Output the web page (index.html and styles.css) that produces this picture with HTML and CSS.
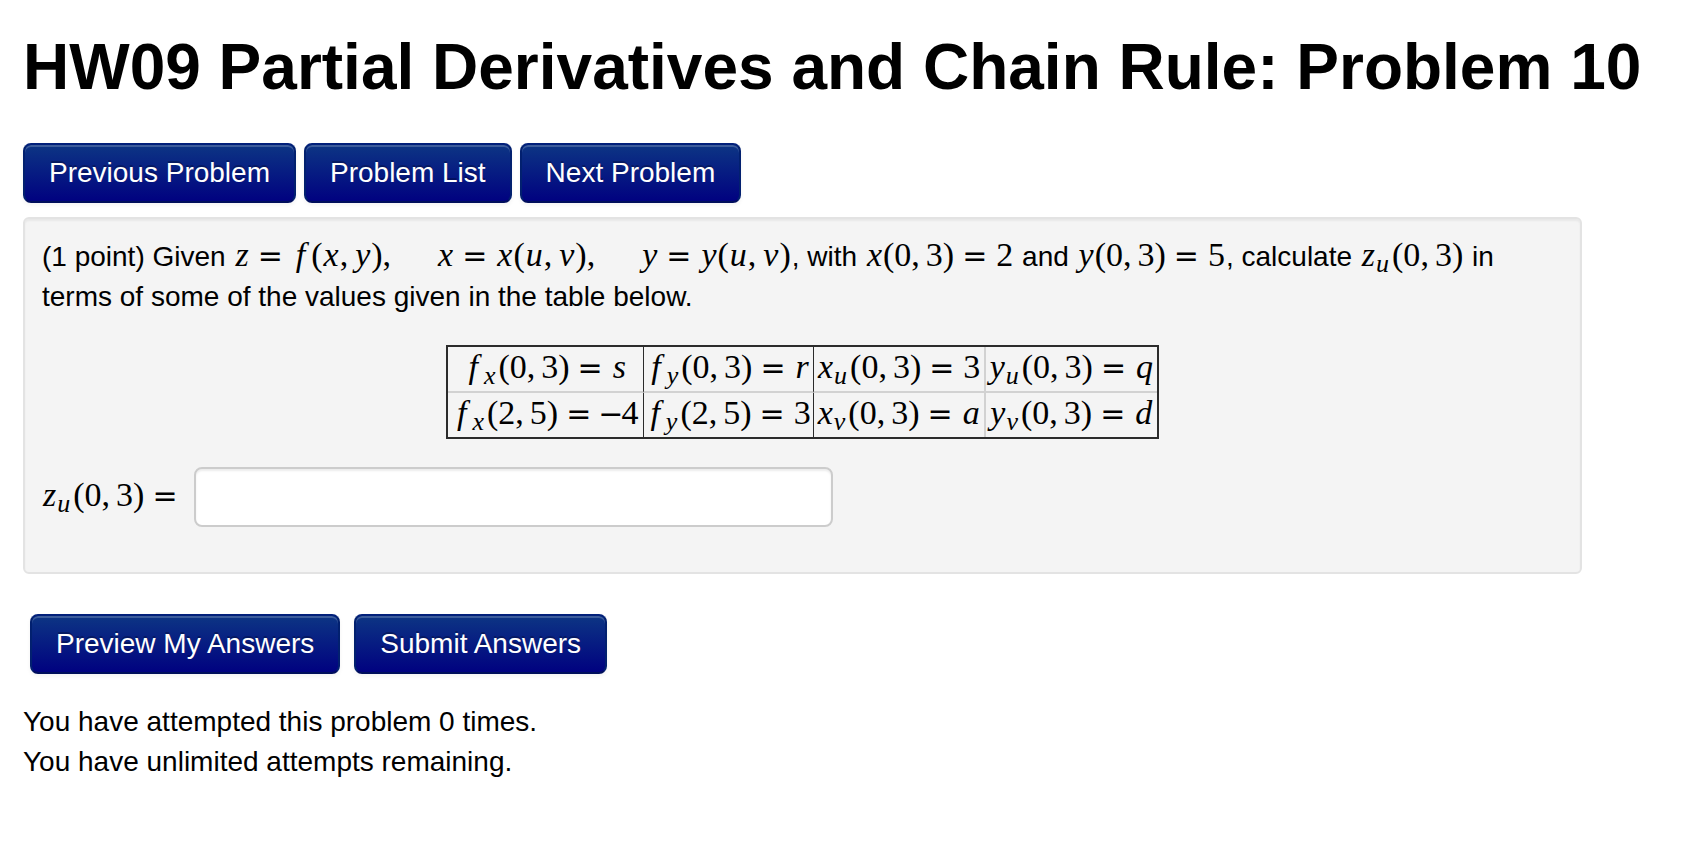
FILE: index.html
```html
<!DOCTYPE html>
<html lang="en">
<head>
<meta charset="utf-8">
<meta name="viewport" content="width=device-width, initial-scale=1">
<title>HW09 Partial Derivatives and Chain Rule: Problem 10</title>
<link rel="stylesheet" href="styles.css">
</head>
<body>
<main class="page">
  <h1 class="title">HW09 Partial Derivatives and Chain Rule: Problem 10</h1>

  <nav class="nav">
    <a class="btn" href="#previous">Previous Problem</a>
    <a class="btn" href="#list">Problem List</a>
    <a class="btn" href="#next">Next Problem</a>
  </nav>

  <form class="form">
    <section class="well">
      <p class="statement">(1 point) Given
        <span class="math"><var>z</var><span class="rel">=</span><var class="f">f</var>(<var>x</var><span class="sep">,</span><var>y</var>),</span><span class="quad"></span><span class="math"><var>x</var><span class="rel">=</span><var>x</var>(<var>u</var><span class="sep">,</span><var>v</var>),</span><span class="quad"></span><span class="math"><var>y</var><span class="rel">=</span><var>y</var>(<var>u</var><span class="sep">,</span><var>v</var>)</span>, with
        <span class="math"><var>x</var>(0<span class="sep">,</span>3)<span class="rel">=</span>2</span> and
        <span class="math"><var>y</var>(0<span class="sep">,</span>3)<span class="rel">=</span>5</span>, calculate
        <span class="math"><var>z</var><sub>u</sub>(0<span class="sep">,</span>3)</span> in terms of some of the values given in the table below.</p>

      <table class="values">
        <tbody>
          <tr>
            <td><span class="math"><var class="f">f</var><sub>x</sub>(0<span class="sep">,</span>3)<span class="rel">=</span><var>s</var></span></td>
            <td><span class="math"><var class="f">f</var><sub>y</sub>(0<span class="sep">,</span>3)<span class="rel">=</span><var>r</var></span></td>
            <td><span class="math"><var>x</var><sub>u</sub>(0<span class="sep">,</span>3)<span class="rel">=</span>3</span></td>
            <td><span class="math"><var>y</var><sub>u</sub>(0<span class="sep">,</span>3)<span class="rel">=</span><var>q</var></span></td>
          </tr>
          <tr>
            <td><span class="math"><var class="f">f</var><sub>x</sub>(2<span class="sep">,</span>5)<span class="rel">=</span><span class="minus">−</span>4</span></td>
            <td><span class="math"><var class="f">f</var><sub>y</sub>(2<span class="sep">,</span>5)<span class="rel">=</span>3</span></td>
            <td><span class="math"><var>x</var><sub>v</sub>(0<span class="sep">,</span>3)<span class="rel">=</span><var>a</var></span></td>
            <td><span class="math"><var>y</var><sub>v</sub>(0<span class="sep">,</span>3)<span class="rel">=</span><var>d</var></span></td>
          </tr>
        </tbody>
      </table>

      <div class="answer">
        <label class="math" for="answer"><var>z</var><sub>u</sub>(0<span class="sep">,</span>3)<span class="rel">=</span></label>
        <input class="field" id="answer" type="text" autocomplete="off">
      </div>
    </section>

    <div class="actions">
      <button class="btn" type="button">Preview My Answers</button>
      <button class="btn" type="submit">Submit Answers</button>
    </div>
  </form>

  <p class="status">You have attempted this problem 0 times.<br>You have unlimited attempts remaining.</p>
</main>
</body>
</html>
```
FILE: styles.css
```css
* { box-sizing: border-box; }

body {
  margin: 0;
  background: #fff;
  color: #000;
  font: 28px/40px "Liberation Sans", Arial, sans-serif;
}

.page { padding: 27px 23px; }

.title {
  margin: 0 0 36px;
  font-size: 64px;
  line-height: 80px;
  font-weight: bold;
}

.nav, .actions { display: flex; flex-wrap: wrap; }
.nav { gap: 8px; margin-bottom: 14px; }
.actions { gap: 14px; margin: 40px 0 0 7px; }

.btn {
  padding: 8px 24px;
  border: 2px solid #02206f;
  border-color: #02207a #02206f #000f5c;
  border-radius: 8px;
  background: linear-gradient(#0d3784, #000080) border-box;
  box-shadow: inset 0 2px 0 rgba(255, 255, 255, .2), 0 2px 4px rgba(0, 0, 0, .05);
  color: #fff;
  font: 28px/40px "Liberation Sans", Arial, sans-serif;
  text-decoration: none;
  text-shadow: 0 -2px 0 rgba(0, 0, 0, .25);
  cursor: pointer;
}

.well {
  margin-right: 84px;
  padding: 18px 17px 45px;
  border: 2px solid #e3e3e3;
  border-radius: 6px;
  background: #f4f4f4;
  box-shadow: inset 0 2px 2px rgba(0, 0, 0, .05);
}

.statement { margin: 0; }
.statement .math { margin: 0 1px; }

.math {
  font-family: "Liberation Serif", "Times New Roman", serif;
  font-size: 34px;
  line-height: 32px;
  white-space: nowrap;
}
.math var { margin: 0 1px; }
.math sub {
  margin: 0 3px 0 0;
  font-size: 26px;
  font-style: italic;
  line-height: 0;
  vertical-align: -6px;
}
.math .f { margin: 0 6px 0 4px; }
.rel, .minus {
  font-family: "DejaVu Sans", sans-serif;
  font-size: 30px;
  line-height: 0;
}
.rel { margin: 0 9px 0 8px; }
.minus { margin: 0 -2px; }
.sep { margin-right: 6px; }
.quad { display: inline-block; width: 44px; }

.values {
  margin: 28px auto;
  border: 2px solid #2b2b2b;
  border-collapse: separate;
  border-spacing: 0;
  text-align: center;
}
.values td {
  height: 44px;
  padding: 0 3px;
  border-right: 2px solid #d2d2d2;
}
.values tr:first-child td { height: 46px; border-bottom: 2px solid #d2d2d2; }
.values td:last-child { border-right: 0; }
.values td:nth-child(-n+2) { border-right: 1px solid #2b2b2b; }
.values td:first-child { padding: 0 5px; }
.values td:nth-child(2) { padding: 0 2px; }

.answer { display: flex; align-items: baseline; gap: 7px; }

.field {
  flex: 0 1 639px;
  min-width: 0;
  height: 60px;
  padding: 8px 12px;
  border: 2px solid #ccc;
  border-radius: 8px;
  background: #fff;
  box-shadow: inset 0 2px 2px rgba(0, 0, 0, .075);
  font: inherit;
}

.status { margin: 28px 0 0; }
```
